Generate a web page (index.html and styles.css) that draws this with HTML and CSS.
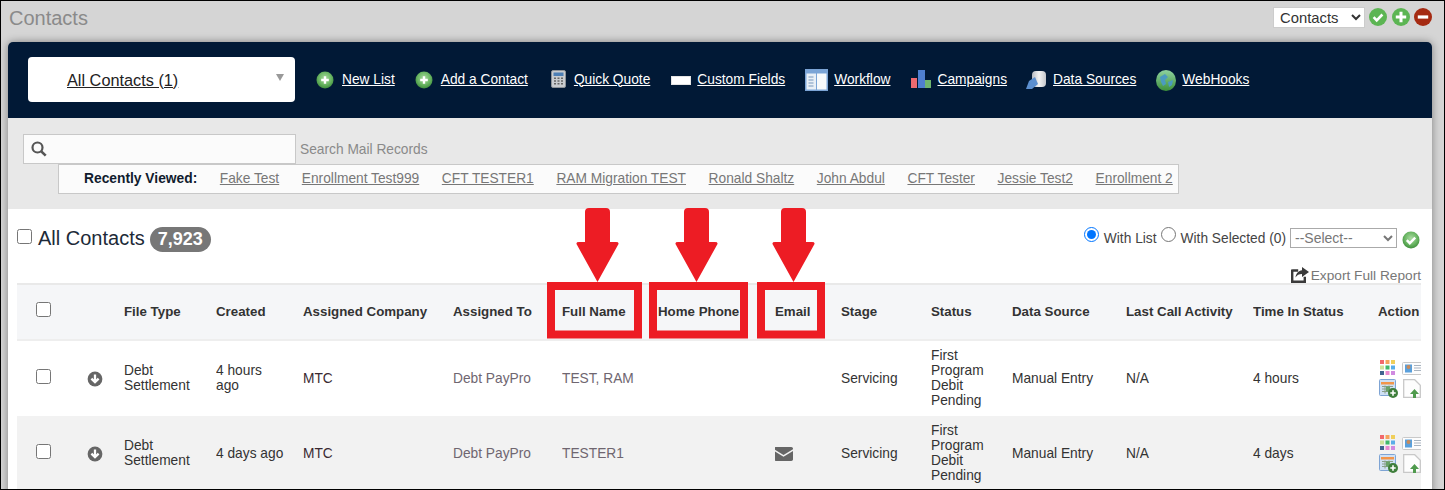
FILE: index.html
```html
<!DOCTYPE html>
<html lang="en">
<head>
<meta charset="utf-8">
<title>Contacts</title>
<link rel="stylesheet" href="styles.css">
</head>
<body>
<svg class="sprite" xmlns="http://www.w3.org/2000/svg" aria-hidden="true">
  <defs>
    <radialGradient id="gGreen" cx="50%" cy="40%" r="60%">
      <stop offset="0" stop-color="#a9dba0"/><stop offset=".6" stop-color="#6cb765"/><stop offset="1" stop-color="#3f8f3c"/>
    </radialGradient>
    <linearGradient id="gGlobe" x1="0" y1="0" x2="0" y2="1">
      <stop offset="0" stop-color="#8fd3a0"/><stop offset="1" stop-color="#3c8f3a"/>
    </linearGradient>
    <linearGradient id="gDisk" x1="0" y1="0" x2="1" y2="0">
      <stop offset="0" stop-color="#b8bcc2"/><stop offset=".5" stop-color="#f2f2f2"/><stop offset="1" stop-color="#c4c6ca"/>
    </linearGradient>
  </defs>
  <symbol id="i-gplus" viewBox="0 0 18 18">
    <circle cx="9" cy="9" r="8.5" fill="url(#gGreen)"/>
    <path d="M7.8 5.200h2.400v2.600h2.600v2.400h-2.600v2.600H7.800v-2.600H5.200V7.800h2.600z" fill="#fff"/>
  </symbol>
  <symbol id="i-gcheck" viewBox="0 0 18 18">
    <circle cx="9" cy="9" r="8.5" fill="url(#gGreen)"/>
    <path d="M4.8 9.2l3 3 5.4-5.6" fill="none" stroke="#fff" stroke-width="2.4"/>
  </symbol>
  <symbol id="i-down" viewBox="0 0 16 16">
    <circle cx="8" cy="8" r="7.4" fill="#666"/>
    <path d="M8 3.500v7.400M4.400 7.600L8 11.200l3.600-3.600" fill="none" stroke="#fff" stroke-width="2.300"/>
  </symbol>
  <symbol id="i-grid" viewBox="0 0 15 15">
    <rect x="0" y="0" width="4" height="4" fill="#f2686c"/><rect x="5.5" y="0" width="4" height="4" fill="#f5a35c"/><rect x="11" y="0" width="4" height="4" fill="#f0cf5a"/>
    <rect x="0" y="5.5" width="4" height="4" fill="#cfe29a"/><rect x="5.5" y="5.5" width="4" height="4" fill="#42b86a"/><rect x="11" y="5.5" width="4" height="4" fill="#5aaee8"/>
    <rect x="0" y="11" width="4" height="4" fill="#41638f"/><rect x="5.5" y="11" width="4" height="4" fill="#e98ad0"/><rect x="11" y="11" width="4" height="4" fill="#d08ae0"/>
  </symbol>
  <symbol id="i-card" viewBox="0 0 21 13">
    <rect x=".5" y=".5" width="20" height="12" rx="1" fill="#fdfdfd" stroke="#c9c9c9"/>
    <rect x="3" y="2.500" width="7" height="8" fill="#5aa0dc"/>
    <circle cx="6.500" cy="5" r="2" fill="#c98b5a"/>
    <path d="M12 3.500h7M12 6h7M12 8.500h7" stroke="#a9b4c0" stroke-width="1.200"/>
  </symbol>
  <symbol id="i-cal" viewBox="0 0 19 19">
    <rect x=".5" y=".5" width="16" height="16" rx="1" fill="#cfe0f4" stroke="#7ea4d4"/>
    <rect x="2" y="3" width="13" height="2.500" fill="#f2954a"/>
    <path d="M3 7.500h11M3 10h11M3 12.500h11M6 6.500v8M10 6.500v8" stroke="#8aa08a" stroke-width="1"/>
    <rect x="7" y="7.500" width="4" height="5" fill="#69a26a"/>
    <circle cx="14" cy="14" r="5" fill="#3f7f3c"/>
    <path d="M14 11.300v5.400M11.300 14h5.400" stroke="#fff" stroke-width="1.600"/>
  </symbol>
  <symbol id="i-doc" viewBox="0 0 18 19">
    <path d="M.7.7h11l5.600 5.600v12H.7z" fill="#fdfdfd" stroke="#c8c8c8" stroke-width="1.300"/>
    <path d="M13 19v-4h3l-4.500-5L7 15h3v4z" fill="#4f9a4d"/>
  </symbol>
</svg>
<main class="frame">
  <header class="titlebar">
    <h1 class="title">Contacts</h1>
    <div class="title-tools">
      <select class="module-select"><option>Contacts</option></select>
      <svg class="tool" viewBox="0 0 18 18"><circle cx="9" cy="9" r="9" fill="#5cb553"/><path d="M4.600 9.200l3.100 3.100 5.700-5.800" fill="none" stroke="#fff" stroke-width="2.600"/></svg>
      <svg class="tool" viewBox="0 0 18 18"><circle cx="9" cy="9" r="9" fill="#5cb553"/><path d="M7.500 3.800h3v3.700h3.700v3h-3.700v3.700h-3v-3.700H3.800v-3h3.700z" fill="#fff"/></svg>
      <svg class="tool tool-last" viewBox="0 0 18 18"><circle cx="9" cy="9" r="9" fill="#a52a12"/><rect x="3.800" y="7.400" width="10.400" height="3.200" fill="#fff"/></svg>
    </div>
  </header>

  <section class="panel">
    <nav class="nav">
      <div class="list-picker">
        <a class="list-picker-link" href="#">All Contacts (1)</a>
        <span class="caret"></span>
      </div>
      <ul class="nav-links">
        <li class="nav-item"><svg class="ni ni-18"><use href="#i-gplus"/></svg><a href="#">New List</a></li>
        <li class="nav-item"><svg class="ni ni-18"><use href="#i-gplus"/></svg><a href="#">Add a Contact</a></li>
        <li class="nav-item">
          <svg class="ni ni-calc" viewBox="0 0 15 18"><rect x=".5" y=".5" width="14" height="17" rx="1.500" fill="#c9ccd0" stroke="#8d9298"/><rect x="2.500" y="2.500" width="10" height="3.500" fill="#4d7fb5"/><path d="M3 8.200h2M6.500 8.200h2M10 8.200h2M3 11h2M6.500 11h2M10 11h2M3 13.800h2M6.500 13.800h2M10 13.800h2" stroke="#666" stroke-width="1.600"/></svg>
          <a href="#">Quick Quote</a></li>
        <li class="nav-item">
          <svg class="ni ni-field" viewBox="0 0 20 9"><rect width="20" height="9" fill="#e4e4e4"/><rect x="1" y="1" width="18" height="7" fill="#fff"/></svg>
          <a href="#">Custom Fields</a></li>
        <li class="nav-item">
          <svg class="ni ni-flow" viewBox="0 0 23 22"><rect width="23" height="22" fill="#7ba4d6"/><rect x="1.500" y="4.500" width="9.500" height="16" fill="#e9eff6"/><rect x="12" y="4.500" width="9.500" height="16" fill="#f7f9fb"/><path d="M3.500 8h5M3.500 11h5M3.500 14h5M3.500 17h5" stroke="#9db5cf" stroke-width="1.600"/></svg>
          <a href="#">Workflow</a></li>
        <li class="nav-item">
          <svg class="ni ni-chart" viewBox="0 0 20 18"><rect y="8" width="6" height="10" fill="#ee6a70"/><rect x="7" width="7" height="18" fill="#4f7fd0"/><rect x="14" y="10" width="6" height="8" fill="#6fb56f"/></svg>
          <a href="#">Campaigns</a></li>
        <li class="nav-item">
          <svg class="ni ni-data" viewBox="0 0 21 20"><rect x="6" y="1" width="14" height="16" rx="4" fill="url(#gDisk)"/><path d="M0 19l3-8 6-4 3 7-6 5z" fill="#5b8fd0"/></svg>
          <a href="#">Data Sources</a></li>
        <li class="nav-item">
          <svg class="ni ni-globe" viewBox="0 0 20 21"><ellipse cx="10" cy="10.500" rx="10" ry="10.500" fill="url(#gGlobe)"/><path d="M4 7l5-3 3 3-3 3 1 4-3 2-2-4zM12 12l5-2-1 5-3 2z" fill="#4b9bc0"/></svg>
          <a href="#">WebHooks</a></li>
      </ul>
    </nav>

    <div class="band">
      <div class="search-row">
        <div class="search-box">
          <svg class="search-icon" viewBox="0 0 16 16"><circle cx="6.500" cy="6.500" r="5" fill="none" stroke="#555" stroke-width="2.200"/><path d="M10.300 10.300l4.400 4.400" stroke="#555" stroke-width="2.600"/></svg>
        </div>
        <span class="search-label">Search Mail Records</span>
      </div>
      <div class="recent">
        <strong class="recent-title">Recently Viewed:</strong>
        <a href="#">Fake Test</a>
        <a href="#">Enrollment Test999</a>
        <a href="#">CFT TESTER1</a>
        <a href="#">RAM Migration TEST</a>
        <a href="#">Ronald Shaltz</a>
        <a href="#">John Abdul</a>
        <a href="#">CFT Tester</a>
        <a href="#">Jessie Test2</a>
        <a href="#">Enrollment 2</a>
      </div>
    </div>

    <div class="content">
      <div class="toolbar">
        <div class="toolbar-left">
          <input class="cb cb-title" type="checkbox">
          <span class="heading">All Contacts</span>
          <span class="badge">7,923</span>
        </div>
        <div class="toolbar-right">
          <div class="bulk">
            <input class="radio" type="radio" name="scope" checked>
            <span class="bulk-label">With List</span>
            <input class="radio" type="radio" name="scope">
            <span class="bulk-label">With Selected (0)</span>
            <select class="bulk-select"><option>--Select--</option></select>
            <svg class="bulk-go"><use href="#i-gcheck"/></svg>
          </div>
          <a class="export" href="#">
            <svg class="export-icon" viewBox="0 0 18 16"><path d="M1.200 3.500h6M1.200 2.500v12.300h12.600v-5" fill="none" stroke="#3a3a3a" stroke-width="2.400"/><path d="M11 0l7 5-7 5V7C8 7 6 8 4.500 10.500 5 6.500 7.500 3.500 11 3.200z" fill="#3a3a3a"/></svg>Export Full Report</a>
        </div>
      </div>

      <table class="grid">
        <colgroup>
          <col class="c1"><col class="c2"><col class="c3"><col class="c4"><col class="c5"><col class="c6"><col class="c7"><col class="c8"><col class="c9"><col class="c10"><col class="c11"><col class="c12"><col class="c13"><col class="c14"><col class="c15">
        </colgroup>
        <thead>
          <tr>
            <th><input class="cb cb-head" type="checkbox"></th>
            <th></th>
            <th>File Type</th>
            <th>Created</th>
            <th>Assigned Company</th>
            <th>Assigned To</th>
            <th>Full Name</th>
            <th>Home Phone</th>
            <th>Email</th>
            <th>Stage</th>
            <th>Status</th>
            <th>Data Source</th>
            <th>Last Call Activity</th>
            <th>Time In Status</th>
            <th>Action</th>
          </tr>
        </thead>
        <tbody>
          <tr>
            <td><input class="cb cb-row" type="checkbox"></td>
            <td><svg class="down"><use href="#i-down"/></svg></td>
            <td class="multi">Debt<br>Settlement</td>
            <td class="multi">4 hours<br>ago</td>
            <td class="strong">MTC</td>
            <td class="muted">Debt PayPro</td>
            <td class="muted">TEST, RAM</td>
            <td></td>
            <td></td>
            <td>Servicing</td>
            <td class="multi">First<br>Program<br>Debit<br>Pending</td>
            <td>Manual Entry</td>
            <td>N/A</td>
            <td>4 hours</td>
            <td>
              <div class="actions">
                <svg class="a-grid"><use href="#i-grid"/></svg>
                <svg class="a-card"><use href="#i-card"/></svg>
                <svg class="a-cal"><use href="#i-cal"/></svg>
                <svg class="a-doc"><use href="#i-doc"/></svg>
              </div>
            </td>
          </tr>
          <tr class="alt">
            <td><input class="cb cb-row" type="checkbox"></td>
            <td><svg class="down"><use href="#i-down"/></svg></td>
            <td class="multi">Debt<br>Settlement</td>
            <td>4 days ago</td>
            <td class="strong">MTC</td>
            <td class="muted">Debt PayPro</td>
            <td class="muted">TESTER1</td>
            <td></td>
            <td><svg class="mail" viewBox="0 0 19 14"><path d="M1.700 0h15.600c.9 0 1.700.8 1.700 1.700v.5L9.500 8 0 2.200v-.5C0 .8.800 0 1.700 0z" fill="#666"/><path d="M0 4l9.500 5.800L19 4v8.300c0 .9-.8 1.700-1.700 1.700H1.700C.8 14 0 13.200 0 12.300z" fill="#666"/></svg></td>
            <td>Servicing</td>
            <td class="multi">First<br>Program<br>Debit<br>Pending</td>
            <td>Manual Entry</td>
            <td>N/A</td>
            <td>4 days</td>
            <td>
              <div class="actions">
                <svg class="a-grid"><use href="#i-grid"/></svg>
                <svg class="a-card"><use href="#i-card"/></svg>
                <svg class="a-cal"><use href="#i-cal"/></svg>
                <svg class="a-doc"><use href="#i-doc"/></svg>
              </div>
            </td>
          </tr>
        </tbody>
      </table>
    </div>
  </section>

  <svg class="marks" viewBox="0 0 1445 490" aria-hidden="true">
    <g fill="#ed1c24">
      <path d="M585 212q0-4 4-4h17q4 0 4 4v30h6q3 0 2.500 2L597.500 282 576.500 244q-.5-2 2.500-2h6z"/>
      <path d="M684 212q0-4 4-4h17q4 0 4 4v30h6q3 0 2.500 2L696.500 282 675.500 244q-.5-2 2.500-2h6z"/>
      <path d="M781 212q0-4 4-4h17q4 0 4 4v30h6q3 0 2.500 2L793.500 282 772.500 244q-.5-2 2.500-2h6z"/>
    </g>
    <g fill="none" stroke="#ed1c24" stroke-width="8">
      <rect x="551" y="286" width="87" height="48.500"/>
      <rect x="653" y="286" width="91" height="48.500"/>
      <rect x="761" y="286" width="60" height="48.500"/>
    </g>
  </svg>
</main>
</body>
</html>
```
FILE: styles.css
```css
* { box-sizing: border-box; }
html, body { margin: 0; padding: 0; }
body { font-family: "Liberation Sans", Arial, sans-serif; font-size: 13.75px; color: #333; overflow: hidden; background: #fff; }
a { color: inherit; }
.sprite { display: block; width: 0; height: 0; }

.frame {
  position: relative;
  width: 1445px;
  height: 490px;
  border: 1px solid #000;
  background: #d5d5d5;
  overflow: hidden;
}

.titlebar {
  display: flex;
  justify-content: space-between;
  height: 41px;
  padding: 6px 12px 0 8px;
}
.title { margin: 0; font-size: 20px; font-weight: 400; line-height: 23px; color: #8a8a8a; }
.title-tools { display: flex; align-items: flex-start; }
.module-select {
  width: 92px;
  height: 21px;
  padding-left: 2px;
  font: 14.8px "Liberation Sans", Arial, sans-serif;
  color: #333;
  background: #fff;
  border: 1px solid #ccc;
  margin-right: 4px;
}
.tool { width: 18px; height: 18px; margin: 1px 0 0 5px; }
.title-tools .tool:first-of-type { margin-left: 0; }
.title-tools .tool-last { margin-left: 4px; }

.panel {
  margin: 0 12px 0 7px;
  box-shadow: 0 0 9px rgba(0, 0, 0, .4);
  border-radius: 5px 5px 0 0;
  height: 460px;
}

.nav {
  display: flex;
  align-items: center;
  height: 76px;
  padding: 0 0 1px 20px;
  background: #011936;
  border-radius: 5px 5px 0 0;
}
.list-picker {
  display: flex;
  align-items: center;
  justify-content: space-between;
  width: 267px;
  height: 45px;
  padding: 0 11px 0 39px;
  background: #fff;
  border-radius: 4px;
  margin-right: 21px;
}
.list-picker-link { font-size: 16.3px; color: #222; padding-top: 1px; }
.caret { width: 0; height: 0; border: 4px solid transparent; border-top: 7px solid #999; border-bottom: 0; margin-top: -4px; }
.nav-links { display: flex; align-items: center; gap: 20px; margin: -1px 0 0; padding: 0; list-style: none; }
.nav-item { display: flex; align-items: center; gap: 8px; color: #fff; }
.ni { display: block; flex: none; }
.ni-18 { width: 18px; height: 18px; margin-top: 2px; }
.ni-calc { width: 15px; height: 18px; margin-left: 3px; }
.ni-field { width: 20px; height: 9px; margin-left: 1px; margin-right: -2px; margin-top: 2px; }
.ni-flow { width: 23px; height: 22px; margin-right: -2px; margin-top: 2px; }
.ni-chart { width: 20px; height: 18px; margin-left: 1px; margin-right: -2px; }
.ni-data { width: 21px; height: 20px; margin-right: -2px; margin-top: 2px; margin-left: -1px; }
.ni-globe { width: 20px; height: 21px; margin-right: -2px; margin-top: 2px; }

.band { height: 91px; padding-top: 16px; background: #e8e8e8; }
.search-row { display: flex; align-items: center; margin-left: 15px; }
.search-box {
  display: flex;
  align-items: center;
  width: 273px;
  height: 30px;
  padding-left: 7px;
  background: #fbfbfb;
  border: 1px solid #c8c8c8;
}
.search-icon { width: 16px; height: 16px; }
.search-label { margin-left: 4px; color: #8a8a8a; }
.recent {
  display: flex;
  align-items: center;
  gap: 22.6px;
  width: 1121px;
  height: 30px;
  margin-left: 50px;
  padding: 0 0 2px 25px;
  background: #fbfbfb;
  border: 1px solid #c8c8c8;
  color: #777;
  white-space: nowrap;
}
.recent-title { color: #111c2e; font-size: 13.8px; }

.content { height: 293px; padding: 0 11px 0 9px; background: #fff; }
.toolbar { display: flex; justify-content: space-between; height: 74px; padding-top: 18px; }
.toolbar-left { display: flex; align-items: center; height: 25px; }
.cb { display: block; width: 15px; height: 15px; margin: 0; }
.cb-title { margin-bottom: 6px; }
.cb-row { margin-bottom: 4px; }
.heading { margin: 0 5px 3px 6px; font-size: 20px; color: #1d2a38; }
.badge {
  height: 25px;
  padding: 0 8px;
  border-radius: 13px;
  background: #777;
  color: #fff;
  font-size: 18px;
  font-weight: 700;
  line-height: 25px;
}
.toolbar-right { display: flex; flex-direction: column; align-items: flex-end; }
.bulk { display: flex; align-items: center; height: 22px; margin-right: 1px; }
.radio { width: 15px; height: 15px; margin: 0 4px 8px 0; }
.bulk-label { margin-left: 1px; margin-right: 4px; color: #444; }
.bulk-select {
  width: 107px;
  height: 20px;
  margin-right: 5px;
  font: 14px "Liberation Sans", Arial, sans-serif;
  color: #777;
  background: #fff;
  border: 1px solid #aaa;
}
.bulk-go { width: 18px; height: 18px; margin-top: 3px; }
.export { display: flex; align-items: flex-start; height: 16px; margin-top: 18px; line-height: 18px; font-size: 13.7px; color: #777; text-decoration: none; }
.export-icon { width: 18px; height: 16px; margin-right: 2px; }

.grid { width: 1404px; table-layout: fixed; border-collapse: separate; border-spacing: 0; }
.c1 { width: 70px; } .c2 { width: 37px; } .c3 { width: 92px; } .c4 { width: 87px; } .c5 { width: 150px; }
.c6 { width: 109px; } .c7 { width: 96px; } .c8 { width: 117px; } .c9 { width: 66px; } .c10 { width: 90px; }
.c11 { width: 81px; } .c12 { width: 114px; } .c13 { width: 127px; } .c14 { width: 125px; } .c15 { width: 43px; }
.grid thead tr { height: 58px; }
.grid tbody tr { height: 75px; }
.grid th {
  padding: 0 0 1px;
  font-size: 13.3px;
  background: #f5f6f8;
  border-top: 2px solid #e9e9e9;
  border-bottom: 2px solid #eee;
  color: #333;
  font-weight: 700;
  text-align: left;
  white-space: nowrap;
  overflow: hidden;
}
.grid td { padding: 0; line-height: 15px; color: #333; overflow: hidden; vertical-align: middle; }
.grid .multi { padding-bottom: 2px; }
.grid tr > :first-child { padding-left: 19px; }
.cb-head { margin-bottom: 4px; }
.alt td { background: #f2f2f2; }
.grid .strong { color: #3a2a32; }
.grid .muted { color: #6f6670; }
.down { display: block; width: 16px; height: 16px; }
.mail { display: block; width: 19px; height: 14px; margin-left: -1px; }
.actions { display: grid; grid-template-columns: 22px 22px; grid-template-rows: 19px 19px; padding-left: 2px; }
.actions svg { display: block; }
.a-grid { width: 15px; height: 15px; }
.a-card { width: 21px; height: 13px; margin-top: 2px; }
.a-cal { width: 19px; height: 19px; margin-left: -1px; }
.a-doc { width: 18px; height: 19px; margin-left: 1px; }

.marks { position: absolute; left: -1px; top: -1px; width: 1445px; height: 490px; pointer-events: none; }
```
